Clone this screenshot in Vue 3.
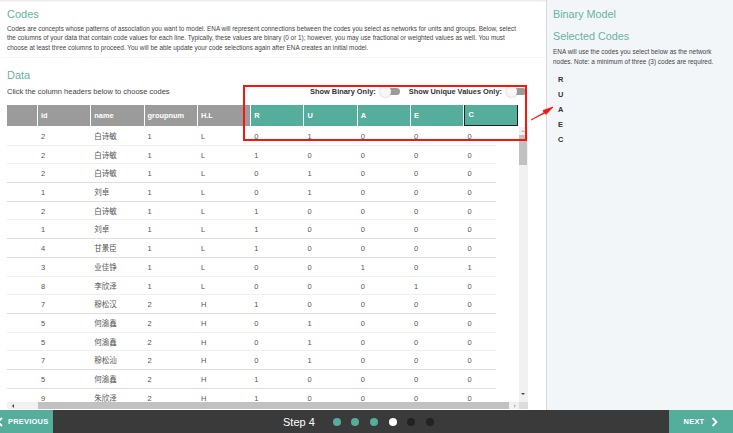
<script setup>
const cols = ['id', 'name', 'groupnum', 'H.L']
const codes = ['R', 'U', 'A', 'E', 'C']
const rows = [
  [2, '白诗敏', 1, 'L', 0, 1, 0, 0, 0],
  [2, '白诗敏', 1, 'L', 1, 0, 0, 0, 0],
  [2, '白诗敏', 1, 'L', 0, 1, 0, 0, 0],
  [1, '刘卓', 1, 'L', 0, 1, 0, 0, 0],
  [2, '白诗敏', 1, 'L', 1, 0, 0, 0, 0],
  [1, '刘卓', 1, 'L', 1, 0, 0, 0, 0],
  [4, '甘景臣', 1, 'L', 1, 0, 0, 0, 0],
  [3, '业佳铮', 1, 'L', 0, 0, 1, 0, 1],
  [8, '李欣泽', 1, 'L', 0, 0, 0, 1, 0],
  [7, '穆松汉', 2, 'H', 1, 0, 0, 0, 0],
  [5, '何渝鑫', 2, 'H', 0, 1, 0, 0, 0],
  [5, '何渝鑫', 2, 'H', 0, 1, 0, 0, 0],
  [7, '穆松汕', 2, 'H', 0, 1, 0, 0, 0],
  [5, '何渝鑫', 2, 'H', 1, 0, 0, 0, 0],
  [9, '朱欣泽', 2, 'H', 1, 0, 0, 0, 0]
]
const strong = [2, 3, 5, 6, 9, 12, 13]
const dots = ['done', 'done', 'done', 'now', 'todo', 'todo']
</script>

<template>
  <div class="page">
    <div class="top">
      <main class="left">
        <section class="intro">
          <h2>Codes</h2>
          <p>Codes are concepts whose patterns of association you want to model. ENA will represent connections between the codes you select as networks for units and groups. Below, select the columns of your data that contain code values for each line. Typically, these values are binary (0 or 1); however, you may use fractional or weighted values as well. You must choose at least three columns to proceed. You will be able update your code selections again after ENA creates an initial model.</p>
        </section>
        <section class="data">
          <h2>Data</h2>
          <div class="toolbar">
            <span class="hint">Click the column headers below to choose codes</span>
            <div class="toggles">
              <span class="tlabel">Show Binary Only:</span>
              <span class="toggle"><i></i></span>
              <span class="tlabel second">Show Unique Values Only:</span>
              <span class="toggle last"><i></i></span>
            </div>
          </div>
          <div class="table">
            <div class="head">
              <div class="hcell"></div>
              <div v-for="c in cols" :key="c" class="hcell">{{ c }}</div>
              <div v-for="c in codes" :key="c" class="hcell code" :class="{ picked: c === 'C' }">{{ c }}</div>
            </div>
            <div class="viewport">
              <div class="body">
                <div v-for="(r, i) in rows" :key="i" class="row" :class="{ strong: strong.includes(i) }">
                  <div></div>
                  <div v-for="(v, j) in r" :key="j" class="cell">{{ v }}</div>
                </div>
              </div>
              <div class="vbar">
                <span class="arrow up"></span>
                <span class="vthumb"></span>
                <span class="arrow down"></span>
              </div>
            </div>
            <div class="hbar">
              <span class="arrow left-a"></span>
              <span class="hthumb"></span>
              <span class="arrow right-a"></span>
              <span class="corner"></span>
            </div>
          </div>
        </section>
      </main>
      <aside class="side">
        <h2>Binary Model</h2>
        <h2 class="sel">Selected Codes</h2>
        <p>ENA will use the codes you select below as the network nodes. Note: a minimum of three (3) codes are required.</p>
        <ul>
          <li v-for="c in codes" :key="c">{{ c }}</li>
        </ul>
      </aside>
    </div>
    <footer class="bar">
      <button class="nav prev">
        <svg width="6" height="10" viewBox="0 0 6 10"><path d="M5 1 1 5l4 4" fill="none" stroke="#fff" stroke-width="1.8"/></svg>
        PREVIOUS
      </button>
      <div class="steps">
        <span class="step">Step 4</span>
        <span v-for="(d, i) in dots" :key="i" class="dot" :class="d"></span>
      </div>
      <button class="nav next">
        NEXT
        <svg width="7" height="10" viewBox="0 0 7 10"><path d="M1.500 1 5.500 5l-4 4" fill="none" stroke="#fff" stroke-width="1.8"/></svg>
      </button>
    </footer>
    <div class="redbox"></div>
    <svg class="redarrow" width="26" height="16" viewBox="0 0 26 16"><path d="M1 15 14 7.500 13 5.500 23 2 16 9.500 15 8z" fill="#f5170f" stroke="#f5170f" stroke-width="0.8"/></svg>
  </div>
</template>

<style scoped>
.page {
  position: relative;
  width: 733px;
  height: 433px;
  overflow: hidden;
  display: flex;
  flex-direction: column;
  background: #fff;
  color: #3a3a3a;
  font-family: "Liberation Sans", "Noto Sans CJK SC", sans-serif;
  box-shadow: inset 0 2px 2px -1px #e4e4e4;
}
.top { flex: 1; display: flex; min-height: 0; }
.left { width: 546px; flex: none; overflow: hidden; }
h2 { margin: 0; font-weight: 400; font-size: 11px; line-height: 16px; color: #68b3a3; }
.intro { padding: 6px 7px 0; height: 58px; box-sizing: border-box; border-bottom: 1px solid #f7f7f7; }
.intro p { margin: 2px 0 0; font-size: 6.400px; line-height: 9.300px; color: #444; width: 515px; }
.data { padding-top: 9px; }
.data h2 { padding-left: 7px; font-size: 11px; }
.toolbar { display: flex; align-items: center; justify-content: space-between; height: 15px; margin: 0 0 6px; padding: 1px 20px 0 7px; }
.hint { font-size: 7.500px; color: #444; }
.toggles { display: flex; align-items: center; }
.tlabel { font-size: 7.400px; font-weight: 700; color: #333; }
.second { margin-left: 9px; }
.toggle { position: relative; width: 19px; height: 7px; margin-left: 5px; background: #9a9a9a; border-radius: 4px; }
.toggle i { position: absolute; left: -1px; top: -2px; width: 11px; height: 11px; border-radius: 50%; background: #f7f7f7; box-shadow: 0 0 2px #aaa; }
.table { margin-left: 7px; width: 521px; }
.head { display: grid; grid-template-columns: 31px repeat(9, 53.300px); width: 512px; height: 21px; }
.hcell { background: #9b9b9b; color: #fff; font-size: 7.400px; font-weight: 700; line-height: 21px; padding-left: 3px; border-right: 1px solid #fff; box-sizing: border-box; white-space: nowrap; }
.hcell.code { background: #55ae9b; }
.hcell.picked { border: 1px solid #222; border-width: 0 1px 1px 1px; line-height: 20px; padding-left: 3px; }
.viewport { display: flex; height: 275px; overflow: hidden; margin-top: 1px; }
.body { width: 489px; flex: none; margin-right: 23px; }
.row { display: grid; grid-template-columns: 31px repeat(8, 53.300px) 1fr; height: 18.700px; box-sizing: border-box; border-bottom: 1px solid #f0f0f0; }
.row.strong { border-bottom-color: #dedede; }
.cell { font-size: 7.500px; line-height: 20px; padding-left: 3px; color: #555; white-space: nowrap; }
.vbar { position: relative; width: 9px; height: 100%; background: #f1f1f1; flex: none; }
.vthumb { position: absolute; left: 0; top: 8px; width: 8px; height: 30px; background: #c1c1c1; }
.arrow { position: absolute; width: 0; height: 0; border: 2px solid transparent; }
.up { left: 2px; top: 1px; border-bottom-color: #bbb; }
.down { left: 2px; bottom: 5px; border-top-color: #444; }
.hbar { position: relative; height: 7px; background: #f1f1f1; }
.hthumb { position: absolute; left: 31px; right: 19px; top: 0; bottom: 0; background: #c1c1c1; }
.left-a { left: 3px; top: 1.500px; border-right-color: #444; }
.right-a { right: 10px; top: 1.500px; border-left-color: #bbb; }
.corner { position: absolute; right: 0; top: 0; width: 9px; height: 7px; background: #dcdcdc; }
.side { flex: 1; background: #f2f6f8; border-left: 1px solid #d8d8d8; padding: 6px 11px 0 6px; }
.side h2 { font-size: 10.800px; }
.side .sel { margin-top: 6px; }
.side p { margin: 3px 0 0; font-size: 6.450px; line-height: 9.800px; color: #444; }
.side ul { list-style: none; margin: 5px 0 0; padding: 0 0 0 5px; }
.side li { font-size: 7.400px; font-weight: 700; line-height: 15px; color: #333; }
.bar { flex: none; height: 23px; background: #3a3a3a; display: flex; justify-content: space-between; position: relative; }
.nav { border: 0; background: #55ae9b; color: #fff; font: 700 7.500px "Liberation Sans", sans-serif; display: flex; align-items: center; padding: 0; letter-spacing: 0.2px; }
.prev { width: 53px; gap: 5px; }
.prev svg { margin-left: -3px; }
.next { width: 64px; gap: 7px; justify-content: center; }
.steps { position: absolute; left: 283px; top: 0; height: 100%; display: flex; align-items: center; gap: 10.700px; }
.step { color: #fff; font-size: 11px; margin-right: 7px; }
.dot { width: 8px; height: 8px; border-radius: 50%; background: #222; }
.dot.done { background: #55ae9b; }
.dot.now { background: #fff; }
.redbox { position: absolute; left: 243px; top: 85px; width: 284px; height: 56px; box-sizing: border-box; border: 2px solid #f5170f; }
.redarrow { position: absolute; left: 530px; top: 105px; }
</style>
